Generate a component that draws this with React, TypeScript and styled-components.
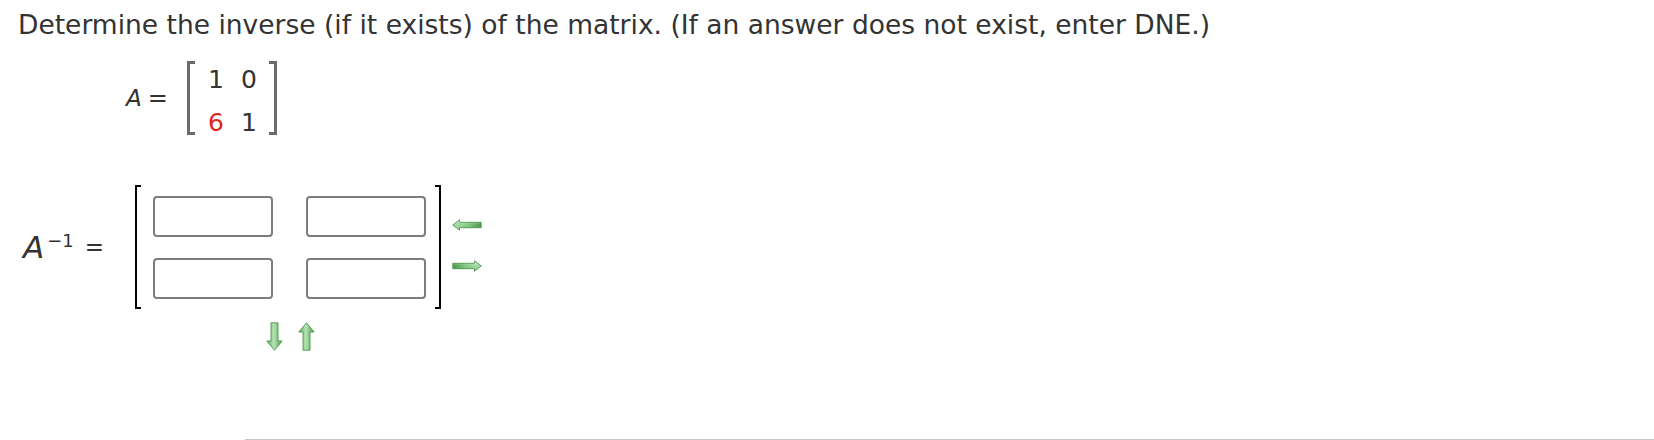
import React from "react";
import styled, { createGlobalStyle } from "styled-components";

const Global = createGlobalStyle`
  html, body { margin: 0; padding: 0; background: #ffffff; }
  body { font-family: "DejaVu Sans", Verdana, sans-serif; color: #333333; }
`;

const Page = styled.div`
  width: 1654px;
  height: 440px;
  display: flex;
  flex-direction: column;
  overflow: hidden;
`;

const Title = styled.p`
  margin: 0;
  padding: 10px 0 0 18px;
  font-size: 26.5px;
  line-height: 30px;
  color: #333333;
  white-space: nowrap;
`;

const MathRow = styled.div<{ $top: number; $left: number }>`
  display: flex;
  align-items: center;
  margin-top: ${(p) => p.$top}px;
  padding-left: ${(p) => p.$left}px;
`;

const Var = styled.span<{ $size: number }>`
  font-style: italic;
  font-size: ${(p) => p.$size}px;
  line-height: 1;
  color: #333333;
  white-space: nowrap;
`;

const Sup = styled.sup`
  font-style: normal;
  font-size: 18px;
  line-height: 1;
  vertical-align: 0;
  position: relative;
  top: -11px;
  margin-left: 3px;
`;

const Eq = styled.span<{ $size: number; $ml: number; $mr: number }>`
  font-size: ${(p) => p.$size}px;
  line-height: 1;
  margin: 0 ${(p) => p.$mr}px 0 ${(p) => p.$ml}px;
  color: #333333;
`;

const Matrix = styled.div`
  display: flex;
  align-items: stretch;
`;

const Bracket = styled.div<{ $side: "left" | "right"; $color: string; $thick: number; $hook: number }>`
  width: ${(p) => p.$hook}px;
  box-sizing: border-box;
  border-top: ${(p) => p.$thick}px solid ${(p) => p.$color};
  border-bottom: ${(p) => p.$thick}px solid ${(p) => p.$color};
  border-${(p) => p.$side}: ${(p) => p.$thick}px solid ${(p) => p.$color};
`;

const SmallGrid = styled.div`
  display: grid;
  grid-template-columns: 22px 22px;
  grid-auto-rows: 26px;
  column-gap: 11px;
  row-gap: 17px;
  padding: 5px 9px 0 10px;
`;

const Cell = styled.span<{ $red?: boolean }>`
  display: flex;
  align-items: center;
  justify-content: center;
  font-size: 25px;
  line-height: 1;
  color: ${(p) => (p.$red ? "#e0231c" : "#333333")};
`;

const InputGrid = styled.div`
  display: grid;
  grid-template-columns: 120px 120px;
  grid-auto-rows: 41px;
  column-gap: 33px;
  row-gap: 21px;
  padding: 11px 9px 10px 12px;
`;

const AnswerBox = styled.input`
  box-sizing: border-box;
  width: 100%;
  height: 100%;
  margin: 0;
  border: 2px solid #7d7d7d;
  border-radius: 4px;
  background: #ffffff;
  outline: none;
`;

const RowArrows = styled.div`
  display: flex;
  flex-direction: column;
  gap: 29px;
  margin-left: 11px;
  margin-top: -3px;
`;

const ColArrows = styled.div`
  display: flex;
  gap: 15px;
  margin-top: 13px;
  padding-left: 266px;
`;

const Rule = styled.div`
  margin-top: auto;
  margin-left: 245px;
  height: 1px;
  background: #c4c4c4;
`;

const HArrow = ({ dir }: { dir: "left" | "right" }) => (
  <svg width="30" height="12" viewBox="0 0 30 12" style={{ transform: dir === "right" ? "scaleX(-1)" : undefined }}>
    <defs>
      <linearGradient id={`hg-${dir}`} x1="0" y1="0" x2="1" y2="0">
        <stop offset="0" stopColor="#aee0ae" />
        <stop offset="0.55" stopColor="#80c680" />
        <stop offset="1" stopColor="#449444" />
      </linearGradient>
      <linearGradient id={`hs-${dir}`} x1="0" y1="0" x2="0" y2="1">
        <stop offset="0" stopColor="#ffffff" stopOpacity="0.45" />
        <stop offset="0.5" stopColor="#ffffff" stopOpacity="0" />
        <stop offset="1" stopColor="#1f5f1f" stopOpacity="0.2" />
      </linearGradient>
    </defs>
    <path
      d="M0.8 6 L7.5 0.8 L7.5 3.3 L29.2 3.3 L29.2 8.7 L7.5 8.7 L7.5 11.2 Z"
      fill={`url(#hg-${dir})`}
      stroke="#4c944c"
      strokeWidth="0.9"
      strokeLinejoin="round"
    />
    <path d="M1.5 6 L7.5 1.5 L7.5 3.8 L28.8 3.8 L28.8 8.3 L7.5 8.3 L7.5 10.5 Z" fill={`url(#hs-${dir})`} />
  </svg>
);

const VArrow = ({ dir }: { dir: "up" | "down" }) => (
  <svg width="17" height="29" viewBox="0 0 17 29" style={{ transform: dir === "up" ? "scaleY(-1)" : undefined }}>
    <defs>
      <linearGradient id={`vg-${dir}`} x1="0" y1="0" x2="1" y2="0">
        <stop offset="0" stopColor="#5aa85a" />
        <stop offset="0.45" stopColor="#b4e4b4" />
        <stop offset="1" stopColor="#4f9e4f" />
      </linearGradient>
    </defs>
    <path
      d="M5 0.8 L12 0.8 L12 19 L16.2 19 L8.5 28.2 L0.8 19 L5 19 Z"
      fill={`url(#vg-${dir})`}
      stroke="#4c944c"
      strokeWidth="0.9"
      strokeLinejoin="round"
    />
  </svg>
);

export default function App() {
  return (
    <Page>
      <Global />
      <Title>Determine the inverse (if it exists) of the matrix. (If an answer does not exist, enter DNE.)</Title>

      <MathRow $top={21} $left={126}>
        <Var $size={23}>A</Var>
        <Eq $size={24} $ml={6} $mr={19}>=</Eq>
        <Matrix>
          <Bracket $side="left" $color="#6b6b6b" $thick={3} $hook={8} />
          <SmallGrid>
            <Cell>1</Cell>
            <Cell>0</Cell>
            <Cell $red>6</Cell>
            <Cell>1</Cell>
          </SmallGrid>
          <Bracket $side="right" $color="#6b6b6b" $thick={3} $hook={8} />
        </Matrix>
      </MathRow>

      <MathRow $top={50} $left={23}>
        <Var $size={31}>
          A<Sup>−1</Sup>
        </Var>
        <Eq $size={23} $ml={11} $mr={31}>=</Eq>
        <Matrix>
          <Bracket $side="left" $color="#000000" $thick={2} $hook={6} />
          <InputGrid>
            <AnswerBox aria-label="row 1 column 1" />
            <AnswerBox aria-label="row 1 column 2" />
            <AnswerBox aria-label="row 2 column 1" />
            <AnswerBox aria-label="row 2 column 2" />
          </InputGrid>
          <Bracket $side="right" $color="#000000" $thick={2} $hook={6} />
        </Matrix>
        <RowArrows>
          <HArrow dir="left" />
          <HArrow dir="right" />
        </RowArrows>
      </MathRow>

      <ColArrows>
        <VArrow dir="down" />
        <VArrow dir="up" />
      </ColArrows>

      <Rule />
    </Page>
  );
}
